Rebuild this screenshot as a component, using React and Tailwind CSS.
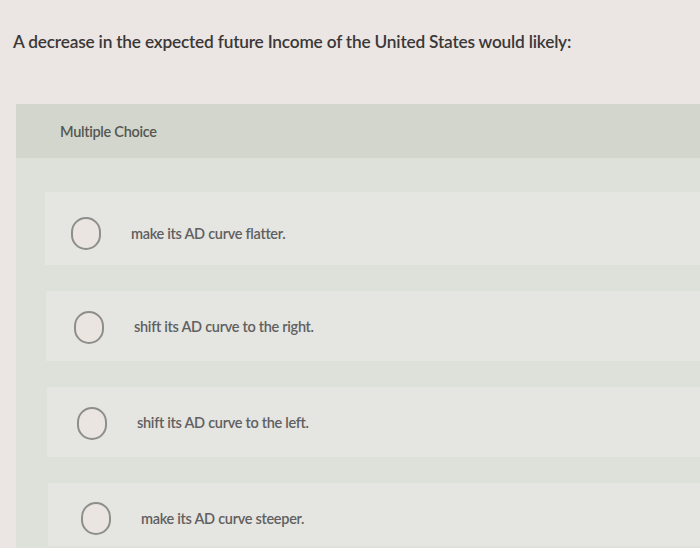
import React from "react";

const options = [
  { text: "make its AD curve flatter.", ml: "ml-[29px]", h: "h-[73px]", pl: "pl-[26px]", pt: "pt-[10px]" },
  { text: "shift its AD curve to the right.", ml: "ml-[30px]", h: "h-[70px]", pl: "pl-[28px]", pt: "pt-[2px]" },
  { text: "shift its AD curve to the left.", ml: "ml-[31px]", h: "h-[70px]", pl: "pl-[30px]", pt: "pt-[2px]" },
  { text: "make its AD curve steeper.", ml: "ml-[32px]", h: "h-[63px]", pl: "pl-[33px]", pt: "pt-[8px]" },
];

function Radio() {
  return (
    <div className="w-[30px] h-[33px] shrink-0 rounded-full border-2 border-[#8e8e8a] bg-[#ebe5e2]" />
  );
}

export default function App() {
  return (
    <div
      className="w-[700px] h-[548px] overflow-hidden bg-[#ebe5e3] flex flex-col"
      style={{ fontFamily: "Lato, 'Open Sans', sans-serif" }}
    >
      <div className="h-[104px] pl-[13px] pt-[30px] shrink-0">
        <p className="text-[17.3px] font-semibold text-[#3a3837] tracking-[-0.2px] leading-[24px]">
          A decrease in the expected future Income of the United States would likely:
        </p>
      </div>
      <div className="ml-[16px] flex-1 flex flex-col bg-[#dee1d9]">
        <div className="h-[54px] shrink-0 bg-[#d3d6cd] flex items-center pl-[44px] pt-[2px]">
          <span className="text-[14.5px] font-semibold text-[#555752] tracking-[-0.3px]">
            Multiple Choice
          </span>
        </div>
        <div className="flex flex-col gap-[26px] pt-[34px]">
          {options.map((o, i) => (
            <div
              key={i}
              className={`${o.ml} ${o.h} ${o.pl} ${o.pt} flex items-center bg-[#e5e5e1] gap-[30px]`}
            >
              <Radio />
              <span className="text-[14.5px] font-semibold text-[#606060] tracking-[-0.3px]">
                {o.text}
              </span>
            </div>
          ))}
        </div>
      </div>
    </div>
  );
}
